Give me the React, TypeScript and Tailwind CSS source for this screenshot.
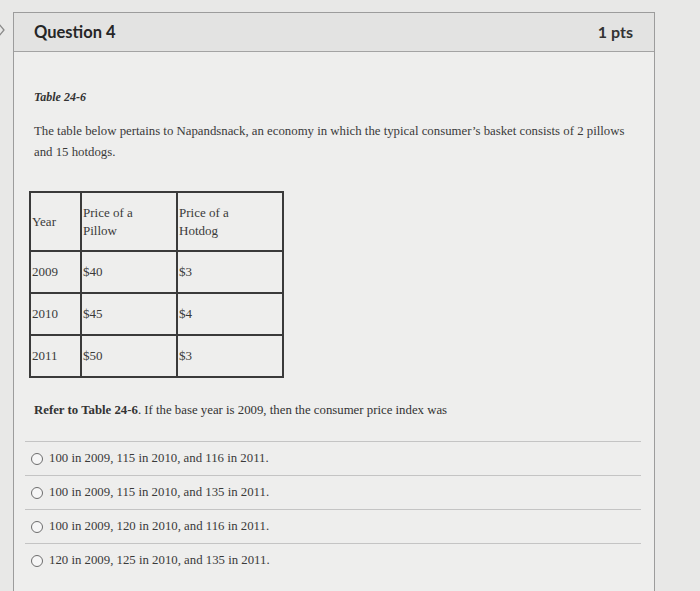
import React from "react";

const serif = { fontFamily: '"Liberation Serif", "Times New Roman", serif' };

const rows = [
  { year: "2009", pillow: "$40", hotdog: "$3" },
  { year: "2010", pillow: "$45", hotdog: "$4" },
  { year: "2011", pillow: "$50", hotdog: "$3" },
];

const answers = [
  "100 in 2009, 115 in 2010, and 116 in 2011.",
  "100 in 2009, 115 in 2010, and 135 in 2011.",
  "100 in 2009, 120 in 2010, and 116 in 2011.",
  "120 in 2009, 125 in 2010, and 135 in 2011.",
];

export default function App() {
  return (
    <div className="w-[700px] h-[591px] overflow-hidden bg-[#e8e8e7] flex">
      <div className="w-[13px] pt-[23px] shrink-0">
        <svg width="8" height="14" viewBox="0 0 8 14" className="-ml-[2px]">
          <path d="M1 1 L6 7 L1 13" fill="none" stroke="#8a8a8a" strokeWidth="1.3" />
        </svg>
      </div>

      <div className="mt-[12px] w-[642px] h-[600px] border border-[#9c9c9c] bg-[#eeeeed] text-[#2d2d2d]">
        <div
          className="h-[39px] bg-[#e3e3e2] border-b border-[#a3a3a3] flex items-center justify-between pl-[20px] pr-[21px]"
          style={{ fontFamily: "Lato, sans-serif" }}
        >
          <span className="text-[16.5px] font-bold text-[#262626]">Question 4</span>
          <span className="text-[16px] font-bold text-[#333]">1 pts</span>
        </div>

        <div style={serif} className="text-[12.8px]">
          <p className="ml-[20px] mt-[37px] text-[12px] leading-[16px] italic font-bold text-[#333]">Table 24-6</p>

          <p className="ml-[20px] mt-[16px] w-[600px] leading-[21px] text-[#3a3a3a]">
            The table below pertains to Napandsnack, an economy in which the typical consumer’s basket consists of 2 pillows
            and 15 hotdogs.
          </p>

          <table className="ml-[15px] mt-[28px] border-collapse text-[#3a3a3a] text-[13px]">
            <tbody>
              <tr className="h-[59px]">
                <td className="w-[51px] border-2 border-[#3a3a3a] pl-[1px] align-middle leading-[18px]">Year</td>
                <td className="w-[96px] border-2 border-[#3a3a3a] pl-[1px] align-middle leading-[18px]">
                  Price of a<br />Pillow
                </td>
                <td className="w-[106px] border-2 border-[#3a3a3a] pl-[1px] align-middle leading-[18px]">
                  Price of a<br />Hotdog
                </td>
              </tr>
              {rows.map((r) => (
                <tr key={r.year} className="h-[42px]">
                  <td className="border-2 border-[#3a3a3a] pl-[1px] align-middle">{r.year}</td>
                  <td className="border-2 border-[#3a3a3a] pl-[1px] align-middle">{r.pillow}</td>
                  <td className="border-2 border-[#3a3a3a] pl-[1px] align-middle">{r.hotdog}</td>
                </tr>
              ))}
            </tbody>
          </table>

          <p className="ml-[20px] mt-[22px] leading-[21px] text-[#333]">
            <span className="font-bold">Refer to Table 24-6</span>. If the base year is 2009, then the consumer price index was
          </p>

          <div className="ml-[11px] mt-[20px] w-[616px]">
            {answers.map((a) => (
              <div key={a} className="h-[34px] border-t border-[#c4c4c4] flex items-start pt-[8px] text-[#3a3a3a]">
                <span className="ml-[6px] mt-[3px] w-[12px] h-[12px] rounded-full border border-[#6d6d6d] bg-[#f6f6f6] shrink-0" />
                <span className="ml-[6px] leading-[17px]">{a}</span>
              </div>
            ))}
          </div>
        </div>
      </div>
    </div>
  );
}
